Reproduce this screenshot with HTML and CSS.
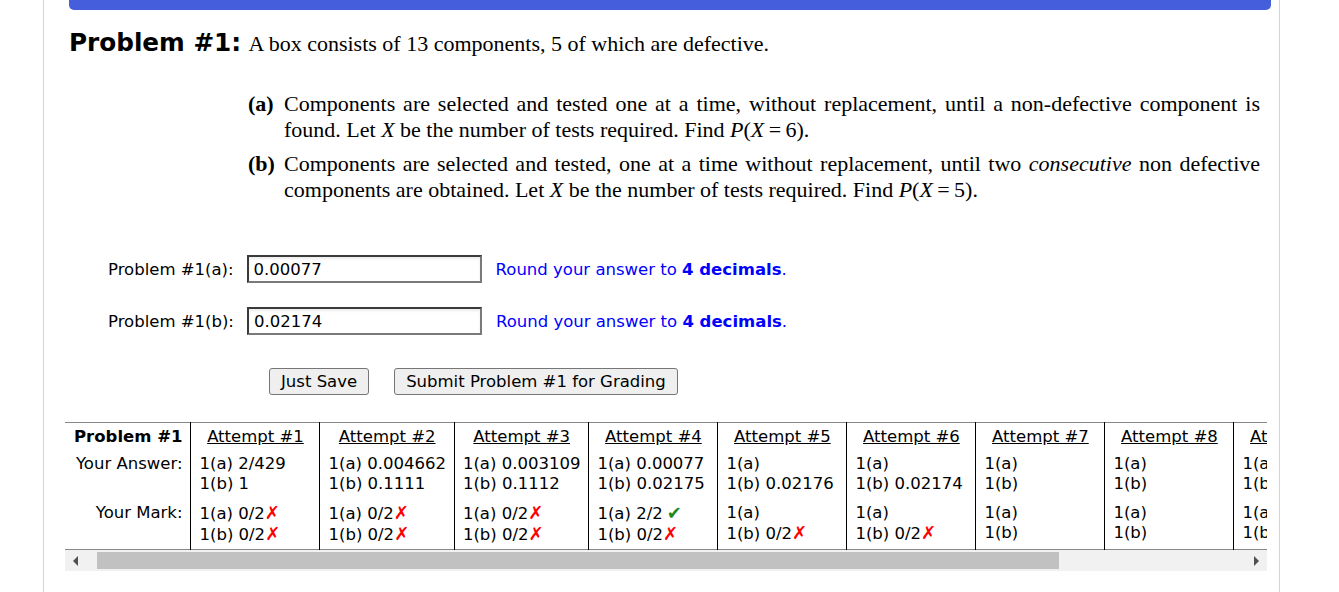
FILE: index.html
```html
<!DOCTYPE html>
<html lang="en">
<head>
    <meta charset="UTF-8">
    <meta name="viewport" content="width=device-width, initial-scale=1.0">
    <title>Problem #1</title>
    <link rel="stylesheet" href="styles.css">
</head>
<body>

<div class="page">
    <div class="topbar"></div>

    <!-- Question text -->
    <h2 class="title"><span class="qnum">Problem #1:</span> A box consists of 13 components, 5 of which are defective.</h2>

    <div class="parts">
        <div class="part">
            <b class="tag">(a)</b>
            <p>Components are selected and tested one at a time, without replacement, until a non-defective component is found. Let <i>X</i> be the number of tests required. Find <i>P</i>(<i>X</i>&#8201;=&#8201;6).</p>
        </div>
        <div class="part">
            <b class="tag">(b)</b>
            <p>Components are selected and tested, one at a time without replacement, until two <i>consecutive</i> non defective components are obtained. Let <i>X</i> be the number of tests required. Find <i>P</i>(<i>X</i>&#8201;=&#8201;5).</p>
        </div>
    </div>

    <!-- Answer form -->
    <form class="answers">
        <div class="answer-row">
            <label for="ans-a">Problem #1(a):</label>
            <input type="text" id="ans-a" name="ans-a" value="0.00077">
            <span class="hint">Round your answer to <b>4 decimals</b>.</span>
        </div>
        <div class="answer-row">
            <label for="ans-b">Problem #1(b):</label>
            <input type="text" id="ans-b" name="ans-b" value="0.02174">
            <span class="hint">Round your answer to <b>4 decimals</b>.</span>
        </div>
        <div class="buttons">
            <button type="button">Just Save</button>
            <button type="button">Submit Problem #1 for Grading</button>
        </div>
    </form>

    <!-- Previous attempts -->
    <div class="attempts">
        <table>
            <tr>
                <th class="rowhead">Problem #1</th>
                <th><a href="#">Attempt #1</a></th>
                <th><a href="#">Attempt #2</a></th>
                <th><a href="#">Attempt #3</a></th>
                <th><a href="#">Attempt #4</a></th>
                <th><a href="#">Attempt #5</a></th>
                <th><a href="#">Attempt #6</a></th>
                <th><a href="#">Attempt #7</a></th>
                <th><a href="#">Attempt #8</a></th>
                <th><a href="#">Attempt #9</a></th>
                <th><a href="#">Attempt #10</a></th>
            </tr>
            <tr>
                <td class="rowhead">Your Answer:</td>
                <td>1(a) 2/429<br>1(b) 1</td>
                <td>1(a) 0.004662<br>1(b) 0.1111</td>
                <td>1(a) 0.003109<br>1(b) 0.1112</td>
                <td>1(a) 0.00077<br>1(b) 0.02175</td>
                <td>1(a)<br>1(b) 0.02176</td>
                <td>1(a)<br>1(b) 0.02174</td>
                <td>1(a)<br>1(b)</td>
                <td>1(a)<br>1(b)</td>
                <td>1(a)<br>1(b)</td>
                <td>1(a)<br>1(b)</td>
            </tr>
            <tr>
                <td class="rowhead">Your Mark:</td>
                <td>1(a) 0/2<span class="wrong">&#10007;</span><br>1(b) 0/2<span class="wrong">&#10007;</span></td>
                <td>1(a) 0/2<span class="wrong">&#10007;</span><br>1(b) 0/2<span class="wrong">&#10007;</span></td>
                <td>1(a) 0/2<span class="wrong">&#10007;</span><br>1(b) 0/2<span class="wrong">&#10007;</span></td>
                <td>1(a) 2/2<span class="right">&#10004;</span><br>1(b) 0/2<span class="wrong">&#10007;</span></td>
                <td>1(a)<br>1(b) 0/2<span class="wrong">&#10007;</span></td>
                <td>1(a)<br>1(b) 0/2<span class="wrong">&#10007;</span></td>
                <td>1(a)<br>1(b)</td>
                <td>1(a)<br>1(b)</td>
                <td>1(a)<br>1(b)</td>
                <td>1(a)<br>1(b)</td>
            </tr>
        </table>
    </div>

    <!-- sideways scroller for the attempts table -->
    <div class="scrollbar">
        <span class="scroll-btn left"></span>
        <div class="scroll-track"><div class="scroll-thumb"></div></div>
        <span class="scroll-btn right"></span>
    </div>
</div>

</body>
</html>
```

FILE: styles.css
```css
body {
    margin: 0;
    font-family: "DejaVu Sans", Verdana, sans-serif;
    font-size: 16.5px;
    color: #000;
    background-color: #fff;
}

.page {
    box-sizing: border-box;
    width: 1237px;
    min-height: 100vh;
    margin-left: 43px;
    padding: 0 8px 0 25px;
    border-left: 1px solid #d4d4d4;
    border-right: 1px solid #d4d4d4;
}

.topbar {
    height: 10px;
    background-color: #455edb;
    border-radius: 0 0 5px 5px;
}

.title {
    margin: 18px 0 0;
    font-family: "Liberation Serif", "Times New Roman", serif;
    font-size: 22px;
    font-weight: normal;
    line-height: 30px;
}

.title .qnum {
    font-family: "DejaVu Sans", Verdana, sans-serif;
    font-size: 24.7px;
    font-weight: bold;
    margin-right: 3px;
}

.parts {
    margin: 32px 11px 0 179px;
    font-family: "Liberation Serif", "Times New Roman", serif;
    font-size: 22px;
    line-height: 26px;
}

.part {
    display: grid;
    grid-template-columns: 36px 1fr;
}

.part + .part {
    margin-top: 8px;
}

.part p {
    margin: 0;
    text-align: justify;
}

.answers {
    margin-top: 52px;
}

.answer-row {
    display: flex;
    align-items: center;
    height: 28px;
    padding-left: 39px;
}

.answer-row + .answer-row {
    margin-top: 24px;
}

.answer-row label {
    margin-right: 13px;
}

.answer-row input {
    box-sizing: border-box;
    width: 235px;
    height: 28px;
    padding: 0 5px;
    font-family: inherit;
    font-size: 16.5px;
    border-style: solid;
    border-width: 2px;
    border-color: #3a3a3a #7a7a7a #7a7a7a #3a3a3a;
    box-shadow: inset 0 2px 3px rgba(0, 0, 0, 0.08);
}

.hint {
    margin-left: 14px;
    color: #0000ff;
}

.buttons {
    display: flex;
    gap: 25px;
    margin-top: 33px;
    padding-left: 200px;
}

.buttons button {
    padding: 3px 11px;
    font-family: inherit;
    font-size: 16.5px;
    line-height: 19px;
    color: #000;
    background-color: #efefef;
    border: 1px solid #767676;
    border-radius: 3px;
}

/* attempts table, clipped on the right */
.attempts {
    margin: 27px 4px 0 -4px;
    overflow: hidden;
}

.attempts table {
    width: max-content;
    border-collapse: collapse;
    border-top: 1px solid #888;
    border-bottom: 1px solid #888;
    line-height: 20px;
    white-space: nowrap;
}

.attempts th,
.attempts td {
    min-width: 112px;
    padding: 5px 8px 4px;
    vertical-align: top;
    text-align: left;
    border-left: 1px solid #000;
}

.attempts th {
    padding: 4px 8px 2px;
    text-align: center;
    font-weight: normal;
}

.attempts .rowhead {
    min-width: 0;
    padding-left: 9px;
    padding-right: 8px;
    text-align: right;
    border-left: none;
}

.attempts th.rowhead {
    text-align: left;
    font-weight: bold;
}

.attempts a {
    color: #000;
    text-decoration: underline;
}

.wrong {
    font-size: 18px;
    font-weight: bold;
    color: #ff0000;
}

.right {
    margin-left: 4px;
    font-size: 18px;
    color: #1e8a1e;
}

.scrollbar {
    display: flex;
    height: 21px;
    margin: 0 4px 0 -4px;
    background-color: #f1f1f1;
}

.scroll-btn {
    display: flex;
    align-items: center;
    justify-content: center;
    width: 21px;
}

.scroll-btn::before {
    content: "";
    border-top: 5px solid transparent;
    border-bottom: 5px solid transparent;
}

.scroll-btn.left::before {
    border-right: 5px solid #505050;
}

.scroll-btn.right::before {
    border-left: 5px solid #505050;
}

.scroll-track {
    flex: 1;
    padding: 2px 0 2px 11px;
}

.scroll-thumb {
    width: 962px;
    height: 100%;
    background-color: #c1c1c1;
}
```
